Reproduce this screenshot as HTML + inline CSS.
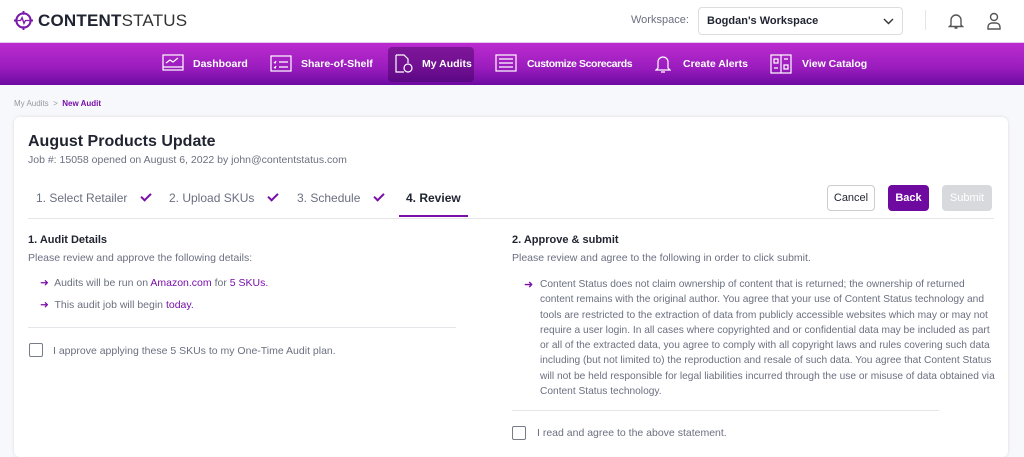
<!DOCTYPE html>
<html><head><meta charset="utf-8"><style>
*{box-sizing:border-box;margin:0;padding:0}
body{width:1024px;height:455px;overflow:hidden;background:#f7f8fc;font-family:"Liberation Sans",sans-serif;position:relative;color:#1f2430}
.abs{position:absolute}
.hdr{left:0;top:0;width:1024px;height:42px;background:#fff}
.nav{left:0;top:42px;width:1024px;height:43px;background:linear-gradient(#bb2bcf,#9a1cbd 60%,#6c0aa2);border-top:1px solid #e9c8f0}
.nt{position:absolute;top:15px;color:#fff;font-size:10.5px;font-weight:bold;white-space:nowrap}
.nav svg{position:absolute}
.card{left:14px;top:117px;width:994px;height:340px;background:#fff;border-radius:6px;box-shadow:0 0 3px rgba(0,0,0,.12)}
.g{color:#6b7080}
.p{color:#7a0fa8}
.t{font-size:11px;white-space:nowrap}
.tab{position:absolute;top:191px;font-size:12px;color:#6b7080;white-space:nowrap}
.ck{display:inline-block;width:10px;height:6px;border-left:2px solid #7a0fa8;border-bottom:2px solid #7a0fa8;transform:rotate(-45deg);margin-left:14px;position:relative;top:-3px}
.btn{position:absolute;top:185px;height:26px;border-radius:4px;font-size:11px;display:flex;align-items:center;justify-content:center}
.cb{position:absolute;width:14px;height:14px;border:1.5px solid #777c88;border-radius:2px}
</style></head><body>
<div class="abs hdr">
 <svg class="abs" style="left:14px;top:11px" width="19" height="19" viewBox="0 0 20 20"><circle cx="10" cy="10" r="7.5" fill="none" stroke="#7a1aa8" stroke-width="2.2"/><path d="M10 0v4M10 16v4M0 10h4M16 10h4" stroke="#7a1aa8" stroke-width="2"/><path d="M4 10h3l1.5-3 2 6 1.5-3h4" fill="none" stroke="#7a1aa8" stroke-width="1.4"/></svg>
 <div class="abs" style="left:38px;top:11px;font-size:17px;letter-spacing:0.2px"><b style="font-weight:900">CONTENT</b><span style="color:#333">STATUS</span></div>
 <div class="abs g" style="left:631px;top:14px;font-size:11px">Workspace:</div>
 <div class="abs" style="left:698px;top:7px;width:205px;height:28px;border:1px solid #ddd;border-radius:4px;font-size:11px;font-weight:bold;padding:7px 0 0 8px">Bogdan's Workspace
  <svg class="abs" style="right:8px;top:10px" width="11" height="7" viewBox="0 0 11 7"><path d="M1 1l4.5 4.5L10 1" fill="none" stroke="#333" stroke-width="1.4"/></svg></div>
 <div class="abs" style="left:925px;top:10px;width:1px;height:20px;background:#e5e5e5"></div>
 <svg class="abs" style="left:948px;top:12px" width="16" height="18" viewBox="0 0 16 18"><path d="M3 13V8a5 5 0 0110 0v5l1.5 1.5h-13z M6.5 16h3" fill="none" stroke="#555" stroke-width="1.4"/></svg>
 <svg class="abs" style="left:986px;top:12px" width="16" height="18" viewBox="0 0 16 18"><circle cx="8" cy="5" r="3.5" fill="none" stroke="#555" stroke-width="1.4"/><path d="M2 17v-2a4 4 0 014-4h4a4 4 0 014 4v2z" fill="none" stroke="#555" stroke-width="1.4"/></svg>
</div>
<div class="abs nav">
 <div class="abs" style="left:388px;top:4px;width:86px;height:35px;background:rgba(60,0,90,.45);border-radius:4px"></div>
 <svg style="left:162px;top:11px" width="22" height="18" viewBox="0 0 22 18"><rect x="1" y="1" width="20" height="15" fill="none" stroke="#fff" stroke-width="1.2"/><path d="M1 13h20M4 9l4-3 3 2 5-4" fill="none" stroke="#fff" stroke-width="1.2"/></svg><div class="nt" style="left:193px">Dashboard</div>
 <svg style="left:270px;top:11px" width="22" height="18" viewBox="0 0 22 18"><rect x="1" y="2" width="20" height="15" fill="none" stroke="#fff" stroke-width="1.2"/><path d="M9 8h9M9 13h9M4 8l1 1 1-2M4 13l1 1 1-2" fill="none" stroke="#fff" stroke-width="1.2"/></svg><div class="nt" style="left:301px">Share-of-Shelf</div>
 <svg style="left:395px;top:11px" width="18" height="20" viewBox="0 0 18 20"><path d="M1 1h8l4 4v4M1 1v17h8" fill="none" stroke="#fff" stroke-width="1.2"/><circle cx="13" cy="14" r="4" fill="none" stroke="#fff" stroke-width="1.2"/></svg><div class="nt" style="left:422px">My Audits</div>
 <svg style="left:495px;top:11px" width="22" height="18" viewBox="0 0 22 18"><rect x="1" y="1" width="20" height="16" fill="none" stroke="#fff" stroke-width="1.2"/><path d="M4 5h14M4 9h14M4 13h14" stroke="#fff" stroke-width="1.2"/></svg><div class="nt" style="left:527px;letter-spacing:-0.4px">Customize Scorecards</div>
 <svg style="left:655px;top:11px" width="16" height="20" viewBox="0 0 16 20"><path d="M3 14V8a5 5 0 0110 0v6l2 2H1z M6 18h4" fill="none" stroke="#fff" stroke-width="1.2"/></svg><div class="nt" style="left:683px">Create Alerts</div>
 <svg style="left:770px;top:11px" width="22" height="20" viewBox="0 0 22 20"><rect x="1" y="1" width="20" height="18" fill="none" stroke="#fff" stroke-width="1.2"/><path d="M11 1v18M4 5h4v4H4zM14 5h4M4 14h4M14 11h4v4h-4z" fill="none" stroke="#fff" stroke-width="1.2"/></svg><div class="nt" style="left:802px">View Catalog</div>
</div>
<div class="abs" style="left:14px;top:99px;font-size:8px;color:#999">My Audits &nbsp;&gt;&nbsp; <b class="p">New Audit</b></div>
<div class="abs card"></div>
<div class="abs" style="left:28px;top:133px;font-size:16px;font-weight:bold">August Products Update</div>
<div class="abs g t" style="left:28px;top:154px;font-size:10.5px">Job #: 15058 opened on August 6, 2022 by john@contentstatus.com</div>
<div class="tab" style="left:36px">1. Select Retailer<span class="ck"></span></div>
<div class="tab" style="left:169px">2. Upload SKUs<span class="ck"></span></div>
<div class="tab" style="left:297px">3. Schedule<span class="ck"></span></div>
<div class="tab" style="left:406px;color:#1f2430;font-weight:bold">4. Review</div>
<div class="abs" style="left:399px;top:215px;width:69px;height:2px;background:#7a0fa8"></div>
<div class="abs" style="left:28px;top:218px;width:966px;height:1px;background:#e6e6ea"></div>
<div class="btn" style="left:827px;width:48px;border:1px solid #ccc;background:#fff">Cancel</div>
<div class="btn" style="left:888px;width:41px;background:#6e0aa0;color:#fff;font-weight:bold">Back</div>
<div class="btn" style="left:942px;width:50px;background:#d8d9dd;color:#fff">Submit</div>
<div class="abs t" style="left:28px;top:234px;font-weight:bold">1. Audit Details</div>
<div class="abs g t" style="left:28px;top:252px;font-size:10.5px">Please review and approve the following details:</div>
<div class="abs g t" style="left:40px;top:277px;font-size:10.5px"><span class="p">➜</span>&nbsp; Audits will be run on <span class="p">Amazon.com</span> for <span class="p">5 SKUs.</span></div>
<div class="abs g t" style="left:40px;top:299px;font-size:10.5px"><span class="p">➜</span>&nbsp; This audit job will begin <span class="p">today.</span></div>
<div class="abs" style="left:28px;top:327px;width:428px;height:1px;background:#e6e6ea"></div>
<div class="cb" style="left:29px;top:343px"></div>
<div class="abs g t" style="left:53px;top:345px;font-size:10.5px">I approve applying these 5 SKUs to my One-Time Audit plan.</div>
<div class="abs t" style="left:512px;top:234px;font-weight:bold">2. Approve &amp; submit</div>
<div class="abs g t" style="left:512px;top:252px;font-size:10.5px">Please review and agree to the following in order to click submit.</div>
<div class="abs p t" style="left:524px;top:278px">➜</div>
<div class="abs g" style="left:540px;top:277px;width:460px;line-height:15.3px;font-size:10.2px">Content Status does not claim ownership of content that is returned; the ownership of returned content remains with the original author. You agree that your use of Content Status technology and tools are restricted to the extraction of data from publicly accessible websites which may or may not require a user login. In all cases where copyrighted and or confidential data may be included as part or all of the extracted data, you agree to comply with all copyright laws and rules covering such data including (but not limited to) the reproduction and resale of such data. You agree that Content Status will not be held responsible for legal liabilities incurred through the use or misuse of data obtained via Content Status technology.</div>
<div class="abs" style="left:512px;top:410px;width:427px;height:1px;background:#e6e6ea"></div>
<div class="cb" style="left:512px;top:426px"></div>
<div class="abs g t" style="left:537px;top:427px;font-size:10.5px">I read and agree to the above statement.</div>
</body></html>
